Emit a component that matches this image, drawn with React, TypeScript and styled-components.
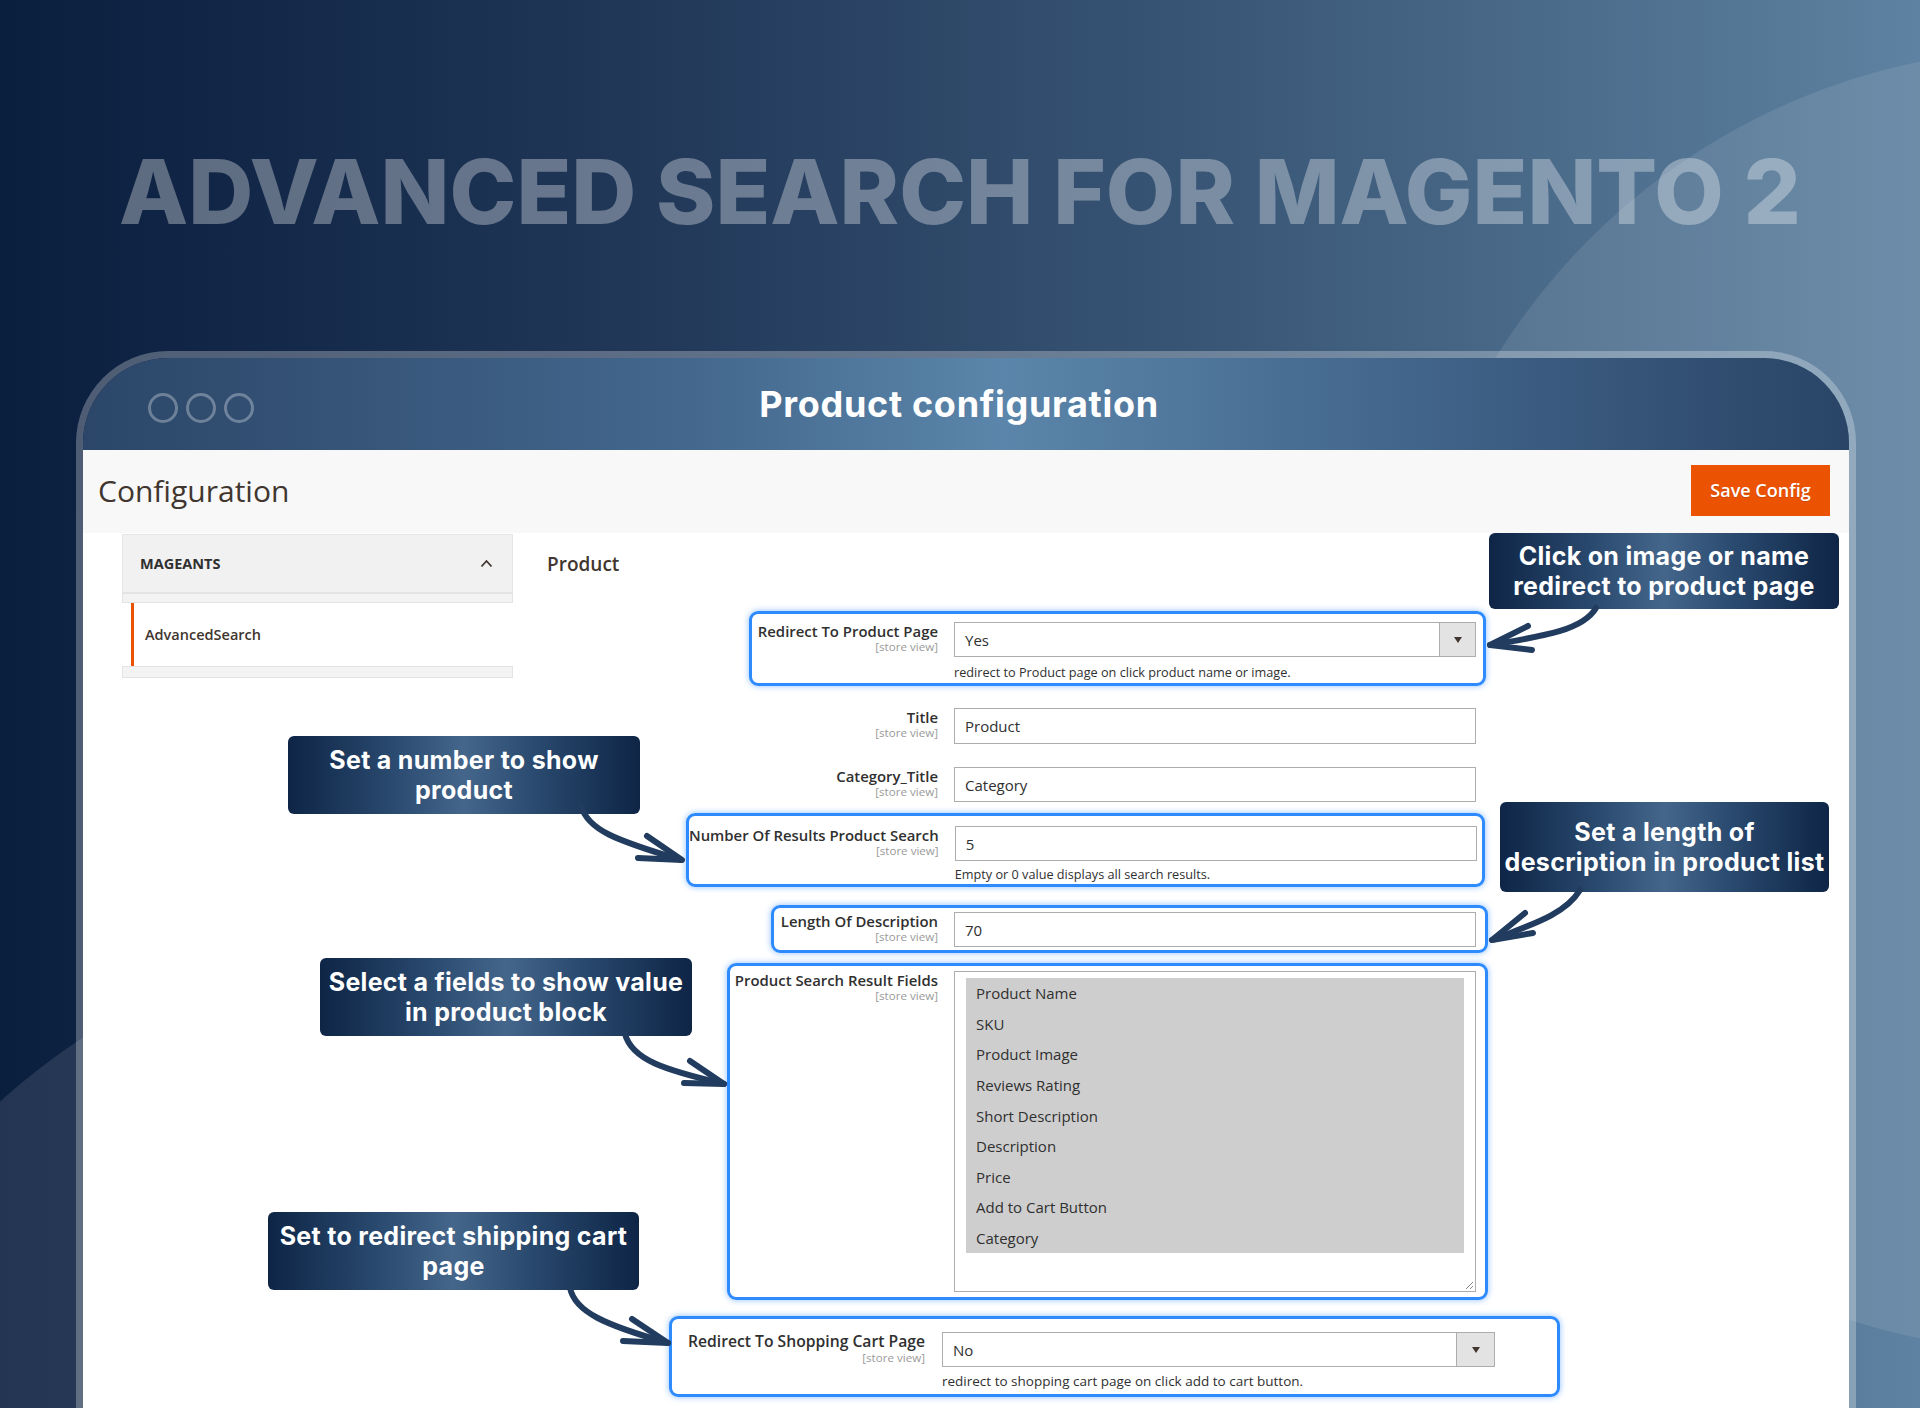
import React from "react";
import styled, { createGlobalStyle } from "styled-components";

const Global = createGlobalStyle`
  html, body { margin: 0; padding: 0; }
  body { width: 1920px; height: 1408px; overflow: hidden; font-family: "Open Sans", "Noto Sans", sans-serif; }
  * { box-sizing: border-box; }
`;

const MAIN_LEFT = 513;

const Page = styled.div`
  position: relative;
  width: 1920px;
  height: 1408px;
  overflow: hidden;
  display: flex;
  flex-direction: column;
  background:
    radial-gradient(circle 652px at 2050px 700px, rgba(255, 255, 255, 0.09) 0 651px, transparent 652px),
    radial-gradient(circle 672px at 450px 1600px, rgba(255, 255, 255, 0.1) 0 671px, transparent 672px),
    linear-gradient(90deg, #0a1e3e 0%, #22395a 35%, #3b5878 65%, #5e82a1 100%);
`;

const HeroTitle = styled.h1`
  margin: 137px 0 0;
  height: 110px;
  line-height: 110px;
  font-family: Inter, "Noto Sans", sans-serif;
  font-weight: 800;
  font-size: 90px;
  color: rgba(255, 255, 255, 0.33);
  text-align: center;
  white-space: nowrap;
`;

const Frame = styled.div`
  margin: 104px 0 0 76px;
  width: 1780px;
  flex: 1;
  border: 7px solid rgba(255, 255, 255, 0.27);
  border-bottom: none;
  border-radius: 92px 92px 0 0;
  display: flex;
  flex-direction: column;
  overflow: hidden;
`;

const FrameHeader = styled.div`
  height: 92px;
  flex: none;
  display: grid;
  grid-template-columns: 1fr auto 1fr;
  align-items: center;
  background: linear-gradient(90deg, #2b4668 0%, #44688e 35%, #5b85aa 52%, #45698f 72%, #294466 100%);
`;

const Dots = styled.div`
  display: flex;
  gap: 8px;
  padding-left: 65px;
  padding-top: 8px;
`;

const Dot = styled.span`
  width: 30px;
  height: 30px;
  border-radius: 50%;
  border: 3px solid rgba(255, 255, 255, 0.3);
`;

const FrameTitle = styled.div`
  margin-right: 14px;
  font-family: Inter, "Noto Sans", sans-serif;
  font-weight: 700;
  font-size: 36px;
  color: #ffffff;
  letter-spacing: 0.7px;
`;

const Content = styled.div`
  flex: 1;
  background: #ffffff;
  display: flex;
  flex-direction: column;
`;

const ConfigBar = styled.div`
  height: 83px;
  flex: none;
  background: #f8f8f8;
  display: flex;
  align-items: center;
  justify-content: space-between;
  padding: 0 19px 3px 15px;
`;

const PageTitle = styled.div`
  font-size: 30px;
  color: #41362f;
  font-weight: 400;
`;

const SaveButton = styled.div`
  width: 139px;
  height: 51px;
  background: #eb5202;
  color: #ffffff;
  font-size: 18px;
  font-weight: 600;
  display: flex;
  align-items: center;
  justify-content: center;
  text-shadow: 0 1px 1px rgba(0, 0, 0, 0.15);
`;

const Body = styled.div`
  flex: 1;
  display: flex;
`;

const Sidebar = styled.div`
  margin: 1px 0 0 39px;
  width: 391px;
  flex: none;
`;

const SideHeader = styled.div`
  height: 59px;
  background: #f1f1f1;
  border: 1px solid #e6e6e6;
  border-bottom-color: #e3e3e3;
  display: flex;
  align-items: center;
  justify-content: space-between;
  padding: 0 19px 0 17px;
  font-size: 14.5px;
  font-weight: 700;
  color: #303030;
`;

const Band = styled.div<{ h: number }>`
  height: ${(p) => p.h}px;
  background: #f3f3f3;
  border: 1px solid #e3e3e3;
`;

const SideItem = styled.div`
  height: 63px;
  margin-left: 9px;
  border-left: 3px solid #eb5202;
  padding-left: 11px;
  display: flex;
  align-items: center;
  font-size: 14.5px;
  font-weight: 600;
  color: #41362f;
`;

const Main = styled.div`
  flex: 1;
  padding-top: 19px;
  display: flex;
  flex-direction: column;
  align-items: flex-start;
`;

const SectionTitle = styled.div`
  margin-left: 34px;
  font-size: 19px;
  line-height: 24px;
  font-weight: 600;
  color: #41362f;
`;

const Row = styled.div<{
  left: number;
  right: number;
  mt: number;
  pt: number;
  pb: number;
  pr: number;
  cw: number;
  gap: number;
  hl?: boolean;
}>`
  margin-left: ${(p) => p.left - MAIN_LEFT}px;
  margin-top: ${(p) => p.mt}px;
  width: ${(p) => p.right - p.left}px;
  flex: none;
  display: grid;
  grid-template-columns: 1fr ${(p) => p.cw}px;
  column-gap: ${(p) => p.gap}px;
  padding: ${(p) => `${p.pt}px ${p.pr}px ${p.pb}px 0`};
  border: 3px solid ${(p) => (p.hl ? "#2e8bff" : "transparent")};
  border-radius: 9px;
  box-shadow: ${(p) => (p.hl ? "0 0 6px rgba(46, 139, 255, 0.55)" : "none")};
`;

const Label = styled.div<{ fs?: number }>`
  text-align: right;
  font-size: ${(p) => p.fs ?? 14.9}px;
  line-height: 1.36;
  margin-top: -1px;
  font-weight: 600;
  color: #303030;
  white-space: nowrap;
`;

const Scope = styled.span`
  display: block;
  margin-top: -2px;
  font-size: 11.6px;
  line-height: 1.36;
  font-weight: 400;
  color: #9a9a9a;
`;

const Control = styled.div`
  display: flex;
  flex-direction: column;
`;

const TextBox = styled.div<{ h: number }>`
  height: ${(p) => p.h}px;
  border: 1px solid #adadad;
  background: #ffffff;
  display: flex;
  align-items: center;
  padding-left: 10px;
  font-size: 15px;
  color: #303030;
`;

const SelectBox = styled(TextBox)`
  padding-left: 0;
  justify-content: space-between;
`;

const SelectValue = styled.span`
  padding-left: 10px;
`;

const Toggle = styled.span<{ w: number }>`
  width: ${(p) => p.w}px;
  align-self: stretch;
  background: #e3e3e3;
  border-left: 1px solid #adadad;
  display: flex;
  align-items: center;
  justify-content: center;
  &::after {
    content: "";
    border-left: 4px solid transparent;
    border-right: 4px solid transparent;
    border-top: 6px solid #41362f;
  }
`;

const Note = styled.div<{ mt: number; fs?: number }>`
  margin-top: ${(p) => p.mt}px;
  font-size: ${(p) => p.fs ?? 12.7}px;
  line-height: 16px;
  color: #303030;
  white-space: nowrap;
`;

const MultiSelect = styled.div`
  position: relative;
  height: 321px;
  border: 1px solid #adadad;
  padding: 6px 11px 0;
`;

const OptionList = styled.div`
  background: #cecece;
  display: flex;
  flex-direction: column;
`;

const Option = styled.div`
  height: 30.6px;
  display: flex;
  align-items: center;
  padding-left: 10px;
  font-size: 15px;
  color: #303030;
`;

const Grip = styled.svg`
  position: absolute;
  right: 1px;
  bottom: 1px;
`;

const Callout = styled.div<{ x: number; y: number; w: number; h: number }>`
  position: absolute;
  left: ${(p) => p.x}px;
  top: ${(p) => p.y}px;
  width: ${(p) => p.w}px;
  height: ${(p) => p.h}px;
  border-radius: 6px;
  background: linear-gradient(90deg, #0e2546 0%, #2a4a6f 30%, #45668b 50%, #2a4a6f 70%, #0e2546 100%);
  display: flex;
  align-items: center;
  justify-content: center;
  text-align: center;
  font-family: Inter, "Noto Sans", sans-serif;
  font-weight: 700;
  font-size: 25px;
  line-height: 30px;
  letter-spacing: 0.3px;
  color: #ffffff;
`;

const Overlay = styled.svg`
  position: absolute;
  left: 0;
  top: 0;
  pointer-events: none;
`;

const options = [
  "Product Name",
  "SKU",
  "Product Image",
  "Reviews Rating",
  "Short Description",
  "Description",
  "Price",
  "Add to Cart Button",
  "Category",
];

const arrows = [
  { shaft: "M1596 608 C1583 630 1545 636 1490 645", head: "M1528 626 L1490 645 L1532 650" },
  { shaft: "M581 806 C588 830 615 840 681 860", head: "M647 836 L682 860 L638 858" },
  { shaft: "M625 1034 C632 1060 665 1070 724 1084", head: "M690 1061 L724 1084 L684 1083" },
  { shaft: "M1580 890 C1565 915 1530 925 1492 940", head: "M1525 913 L1492 940 L1533 933" },
  { shaft: "M570 1288 C575 1312 605 1325 668 1343", head: "M632 1319 L668 1343 L623 1341" },
];

export default function App() {
  return (
    <Page>
      <Global />
      <HeroTitle>ADVANCED SEARCH FOR MAGENTO 2</HeroTitle>
      <Frame>
        <FrameHeader>
          <Dots>
            <Dot />
            <Dot />
            <Dot />
          </Dots>
          <FrameTitle>Product configuration</FrameTitle>
          <div />
        </FrameHeader>
        <Content>
          <ConfigBar>
            <PageTitle>Configuration</PageTitle>
            <SaveButton>Save Config</SaveButton>
          </ConfigBar>
          <Body>
            <Sidebar>
              <SideHeader>
                <span>MAGEANTS</span>
                <svg width="13" height="9" viewBox="0 0 13 9">
                  <polyline points="1.5,7.5 6.5,2 11.5,7.5" fill="none" stroke="#41362f" strokeWidth="1.8" />
                </svg>
              </SideHeader>
              <Band h={10} />
              <SideItem>AdvancedSearch</SideItem>
              <Band h={12} />
            </Sidebar>
            <Main>
              <SectionTitle>Product</SectionTitle>

              <Row hl left={749} right={1486} mt={35} pt={8} pb={3} pr={7} cw={522} gap={16}>
                <Label>
                  Redirect To Product Page
                  <Scope>[store view]</Scope>
                </Label>
                <Control>
                  <SelectBox h={35}>
                    <SelectValue>Yes</SelectValue>
                    <Toggle w={36} />
                  </SelectBox>
                  <Note mt={7}>redirect to Product page on click product name or image.</Note>
                </Control>
              </Row>

              <Row left={749} right={1486} mt={11} pt={8} pb={8} pr={7} cw={522} gap={16}>
                <Label>
                  Title
                  <Scope>[store view]</Scope>
                </Label>
                <Control>
                  <TextBox h={36}>Product</TextBox>
                </Control>
              </Row>

              <Row left={749} right={1486} mt={1} pt={8} pb={8} pr={7} cw={522} gap={16}>
                <Label>
                  Category_Title
                  <Scope>[store view]</Scope>
                </Label>
                <Control>
                  <TextBox h={35}>Category</TextBox>
                </Control>
              </Row>

              <Row hl left={686} right={1485} mt={0} pt={10} pb={2} pr={6} cw={522} gap={16}>
                <Label>
                  Number Of Results Product Search
                  <Scope>[store view]</Scope>
                </Label>
                <Control>
                  <TextBox h={35}>5</TextBox>
                  <Note mt={5}>Empty or 0 value displays all search results.</Note>
                </Control>
              </Row>

              <Row hl left={771} right={1488} mt={18} pt={4} pb={3} pr={9} cw={522} gap={16}>
                <Label>
                  Length Of Description
                  <Scope>[store view]</Scope>
                </Label>
                <Control>
                  <TextBox h={35}>70</TextBox>
                </Control>
              </Row>

              <Row hl left={727} right={1488} mt={10} pt={5} pb={5} pr={9} cw={522} gap={16}>
                <Label>
                  Product Search Result Fields
                  <Scope>[store view]</Scope>
                </Label>
                <Control>
                  <MultiSelect>
                    <OptionList>
                      {options.map((o) => (
                        <Option key={o}>{o}</Option>
                      ))}
                    </OptionList>
                    <Grip width="9" height="9" viewBox="0 0 9 9">
                      <line x1="1" y1="8" x2="8" y2="1" stroke="#8a8a8a" strokeWidth="1" />
                      <line x1="5" y1="8" x2="8" y2="5" stroke="#8a8a8a" strokeWidth="1" />
                    </Grip>
                  </MultiSelect>
                </Control>
              </Row>

              <Row hl left={669} right={1560} mt={16} pt={13} pb={5} pr={62} cw={553} gap={17}>
                <Label fs={15.7}>
                  Redirect To Shopping Cart Page
                  <Scope>[store view]</Scope>
                </Label>
                <Control>
                  <SelectBox h={35}>
                    <SelectValue>No</SelectValue>
                    <Toggle w={38} />
                  </SelectBox>
                  <Note mt={6} fs={13.5}>redirect to shopping cart page on click add to cart button.</Note>
                </Control>
              </Row>
            </Main>
          </Body>
        </Content>
      </Frame>

      <Callout x={1489} y={533} w={350} h={76}>
        Click on image or name
        <br />
        redirect to product page
      </Callout>
      <Callout x={288} y={736} w={352} h={78}>
        Set a number to show
        <br />
        product
      </Callout>
      <Callout x={320} y={958} w={372} h={78}>
        Select a fields to show value
        <br />
        in product block
      </Callout>
      <Callout x={1500} y={802} w={329} h={90}>
        Set a length of
        <br />
        description in product list
      </Callout>
      <Callout x={268} y={1212} w={371} h={78}>
        Set to redirect shipping cart
        <br />
        page
      </Callout>

      <Overlay width="1920" height="1408" viewBox="0 0 1920 1408">
        {arrows.map((a, i) => (
          <g key={i} fill="none" stroke="#213c5f" strokeLinecap="round" strokeLinejoin="round">
            <path d={a.shaft} strokeWidth="6" />
            <path d={a.head} strokeWidth="6" />
          </g>
        ))}
      </Overlay>
    </Page>
  );
}
